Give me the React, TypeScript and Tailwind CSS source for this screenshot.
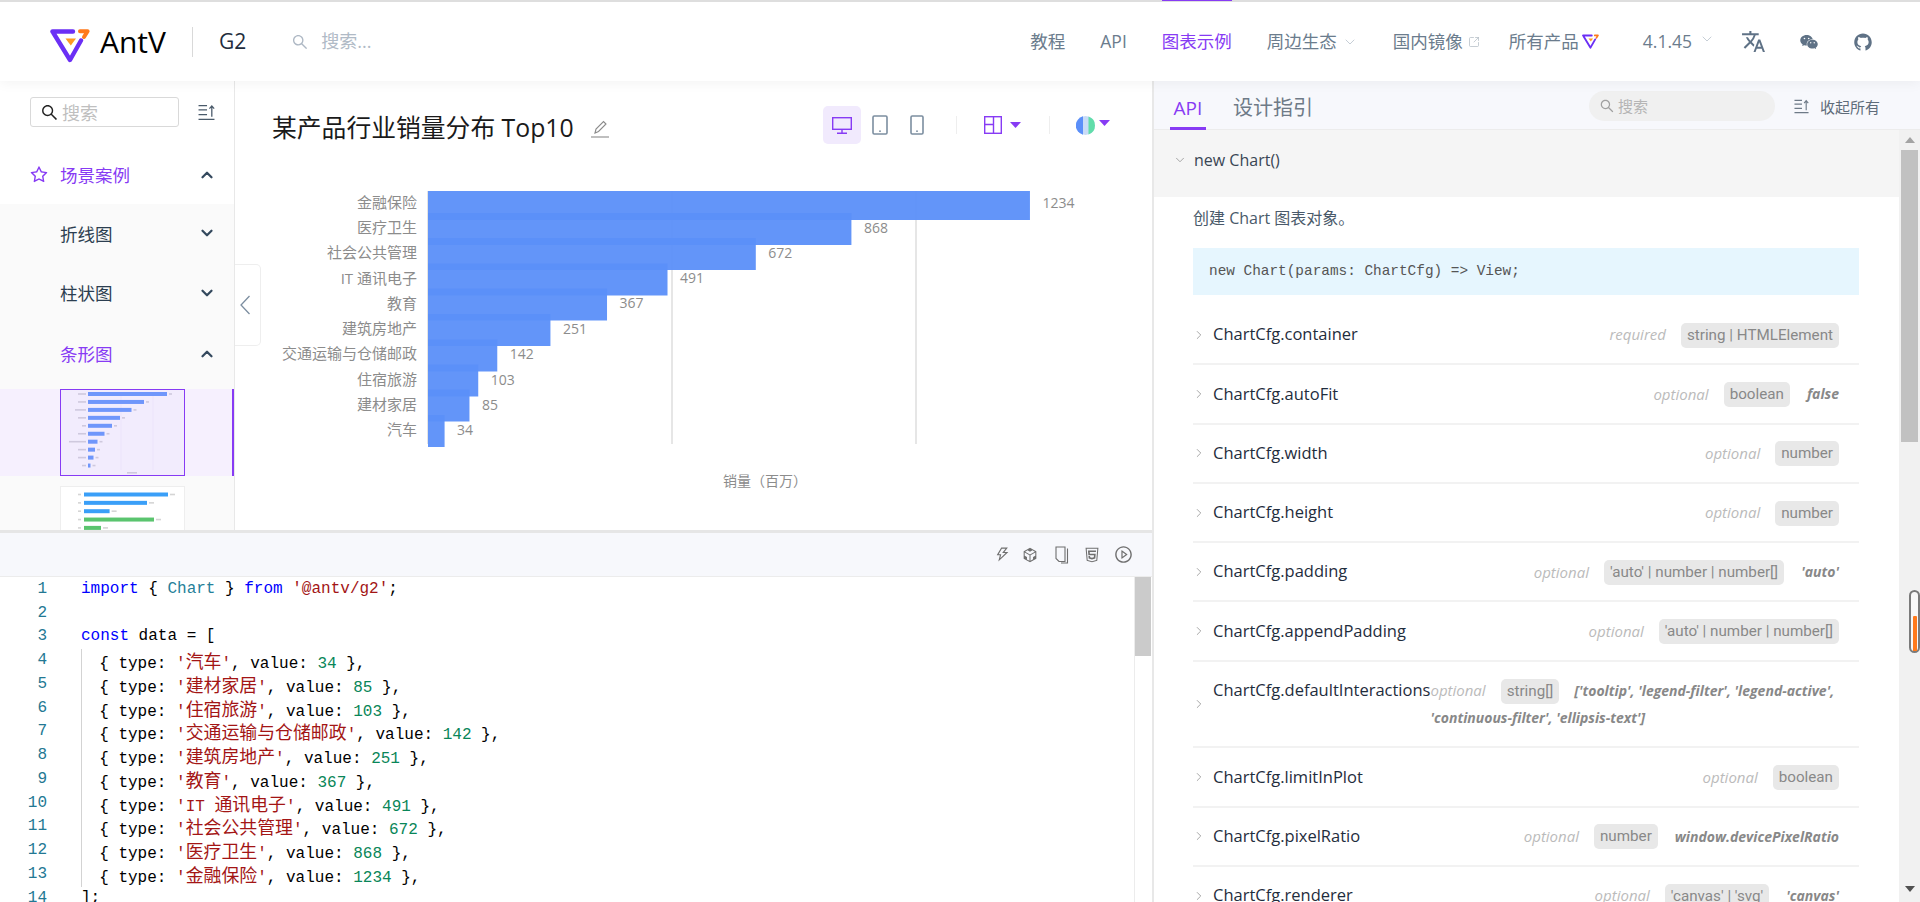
import React from 'react';
import { ChevronDown, ChevronUp, ChevronRight, SquareArrowOutUpRight } from 'lucide-react';
import { AiOutlineSearch, AiOutlineStar, AiFillWechat, AiOutlineGithub, AiOutlineThunderbolt, AiOutlineCodeSandbox, AiOutlineHtml5, AiOutlinePlayCircle } from 'react-icons/ai';
import { MdTranslate } from 'react-icons/md';

const sans = "font-['Open_Sans','Noto_Sans_CJK_SC',sans-serif]";

function Logo({ className }: { className: string }) {
  return (
    <svg viewBox="0 0 40 35" className={className} fill="none">
      <path d="M2.5 3.5H23M2.5 3.5L20 32L31 12.5" stroke="#6b2ff5" strokeWidth="4.4" strokeLinejoin="round" strokeLinecap="round" />
      <path d="M15.5 10.5H26L20.8 17.5Z" fill="#ff9a22" />
      <path d="M30 3.2H37.6L34 9" stroke="#ff7a1c" strokeWidth="4" strokeLinejoin="round" strokeLinecap="round" />
    </svg>
  );
}

function CollapseIcon({ className }: { className: string }) {
  return (
    <svg viewBox="0 0 16 16" className={className} fill="none" stroke="currentColor" strokeWidth="1.2">
      <path d="M0.5 1.5H8.5M0.5 5.5H8.5M0.5 10H8.5M0.5 14.5H15.5" />
      <path d="M13 12V2M10.8 4.4L13 1.8L15.2 4.4" />
    </svg>
  );
}

type Bar = { n: string; v: number; y: number; h: number; ly: number };
const bars: Bar[] = [
  { n: '金融保险', v: 1234, y: 191, h: 29, ly: 202 },
  { n: '医疗卫生', v: 868, y: 213, h: 32, ly: 227 },
  { n: '社会公共管理', v: 672, y: 238, h: 32, ly: 252 },
  { n: 'IT 通讯电子', v: 491, y: 263.5, h: 32, ly: 277.7 },
  { n: '教育', v: 367, y: 288.5, h: 32, ly: 302.7 },
  { n: '建筑房地产', v: 251, y: 314, h: 32, ly: 328 },
  { n: '交通运输与仓储邮政', v: 142, y: 339.5, h: 32, ly: 353 },
  { n: '住宿旅游', v: 103, y: 364.5, h: 32, ly: 379 },
  { n: '建材家居', v: 85, y: 389.5, h: 32, ly: 404 },
  { n: '汽车', v: 34, y: 415, h: 32, ly: 429 },
];

function BarChart() {
  return (
    <svg width="917" height="330" viewBox="235 165 917 330" className="block" style={{ fontFamily: "'Open Sans','Noto Sans CJK SC',sans-serif" }}>
      <line x1="427.5" y1="191" x2="427.5" y2="444" stroke="#e4e4e4" />
      <line x1="672" y1="191" x2="672" y2="444" stroke="#dedede" strokeWidth="1.5" />
      <line x1="916" y1="191" x2="916" y2="444" stroke="#dedede" strokeWidth="1.5" />
      {bars.map((b) => (
        <g key={b.n}>
          <rect x="428" y={b.y} width={b.v * 0.4878} height={b.h} fill="#5b8ff9" fillOpacity="0.95" />
          <text x="417" y={b.ly} textAnchor="end" dominantBaseline="central" fontSize="15" fill="#8c8c8c">{b.n}</text>
          <text x={428 + b.v * 0.4878 + 12.5} y={b.ly} dominantBaseline="central" fontSize="14" fill="#8c8c8c">{b.v}</text>
        </g>
      ))}
      <text x="765" y="480" textAnchor="middle" dominantBaseline="central" fontSize="14" fill="#8c8c8c">销量（百万）</text>
    </svg>
  );
}

function ThumbOne() {
  const w = [79, 56, 43.5, 32, 24, 16.5, 9.5, 7, 5.5, 2.5];
  const l = [8, 8, 11, 8, 4, 8, 17, 8, 8, 4];
  return (
    <svg width="123" height="85" viewBox="0 0 123 85" className="block">
      <line x1="60" y1="2" x2="60" y2="80" stroke="#ece4fb" />
      <line x1="92" y1="2" x2="92" y2="80" stroke="#ece4fb" />
      {w.map((v, i) => (
        <g key={i}>
          <rect x="27" y={2 + i * 7.95} width={v} height="4" fill="#6f96fb" />
          <rect x={25 - l[i]} y={3.2 + i * 7.95} width={l[i]} height="1.6" fill="#cfc9de" />
          <rect x={29 + v} y={3.2 + i * 7.95} width="3" height="1.6" fill="#cfc9de" />
        </g>
      ))}
      <rect x="66" y="82" width="10" height="1.6" fill="#cfc9de" />
    </svg>
  );
}

function ThumbTwo() {
  const d = [
    [84, '#3a9ff8'],
    [63, '#3a9ff8'],
    [25.6, '#3a9ff8'],
    [70, '#5ac46e'],
    [17, '#5ac46e'],
  ] as [number, string][];
  return (
    <svg width="123" height="48" viewBox="0 0 123 48" className="block">
      {d.map(([v, c], i) => (
        <g key={i}>
          <rect x="23" y={5.5 + i * 8.35} width={v} height="4" fill={c} />
          <rect x="17" y={6.7 + i * 8.35} width="3" height="1.6" fill="#d5d5d5" />
          <rect x={25 + v} y={6.7 + i * 8.35} width="5" height="1.6" fill="#d5d5d5" />
        </g>
      ))}
    </svg>
  );
}

function Sidebar() {
  return (
    <div className="w-[235px] shrink-0 border-r border-[#e8e8e8] overflow-hidden flex flex-col bg-white">
      <div className="h-[65px] shrink-0 flex items-start pt-[16px] pl-[30px]">
        <div className="w-[149px] h-[30px] border border-[#d9d9d9] rounded-[3px] flex items-center pl-[9px] text-[#222]">
          <AiOutlineSearch className="w-[19px] h-[19px]" />
          <span className="ml-[3px] mt-[2px] text-[18px] leading-[26px] text-[#bfbfbf]">搜索</span>
        </div>
        <CollapseIcon className="w-[17px] h-[17px] ml-[19px] mt-[7px] text-[#4a5a6a]" />
      </div>
      <div className="h-[58px] shrink-0 flex items-center pl-[29px] pr-[18px] text-[#873bf4] text-[17.5px]">
        <AiOutlineStar className="w-[20px] h-[20px]" />
        <span className="ml-[11px]">场景案例</span>
        <ChevronUp className="ml-auto w-[18px] h-[18px] text-[#34495e]" strokeWidth={3} />
      </div>
      <div className="flex-1 bg-[#fafafa]">
        <div className="h-[60px] flex items-center pl-[60px] pr-[18px] text-[17.5px] text-[#2c3e50]">
          <span>折线图</span>
          <ChevronDown className="ml-auto w-[18px] h-[18px] -mt-[2px] text-[#34495e]" strokeWidth={3} />
        </div>
        <div className="h-[59px] flex items-center pl-[60px] pr-[18px] text-[17.5px] text-[#2c3e50]">
          <span>柱状图</span>
          <ChevronDown className="ml-auto w-[18px] h-[18px] -mt-[2px] text-[#34495e]" strokeWidth={3} />
        </div>
        <div className="h-[66px] pb-[4px] flex items-center pl-[60px] pr-[18px] text-[17.5px] text-[#873bf4]">
          <span>条形图</span>
          <ChevronUp className="ml-auto w-[18px] h-[18px] text-[#34495e]" strokeWidth={3} />
        </div>
        <div className="h-[87px] bg-[#f6f0fe] border-r-[2px] border-[#873bf4] pl-[60px]">
          <div className="w-[125px] h-[87px] border border-[#873bf4] bg-[#f2ecfd]">
            <ThumbOne />
          </div>
        </div>
        <div className="mt-[10px] ml-[60px] w-[125px] h-[50px] border border-[#eeeeee] bg-white">
          <ThumbTwo />
        </div>
      </div>
    </div>
  );
}

function DeviceIcon({ w, h, className }: { w: number; h: number; className: string }) {
  return (
    <svg viewBox={`0 0 ${w} ${h}`} className={className} fill="none">
      <rect x="1" y="1" width={w - 2} height={h - 2} rx="1.2" stroke="#7c8ea0" strokeWidth="1.6" />
      <rect x={w / 2 - 0.8} y={h - 4.6} width="1.6" height="1.6" fill="#7c8ea0" />
    </svg>
  );
}

function ChartArea() {
  return (
    <div className="flex-1 min-w-0 relative bg-white overflow-hidden">
      <div className="h-[84px] flex items-start">
        <div className="ml-[37px] mt-[29px] flex items-center">
          <span className="text-[24.8px] leading-[34px] text-[#1a1a1a]">某产品行业销量分布 Top10</span>
          <svg viewBox="0 0 18 19" className="w-[18px] h-[19px] ml-[17px] mt-[2px]" fill="none" stroke="#8a8a8a" strokeWidth="1.1">
            <path d="M4 14L5 10L12.5 2.5L15 5L7.5 12.5Z" />
            <path d="M0 18H18" />
          </svg>
        </div>
        <div className="ml-auto mr-[42px] mt-[25px] flex items-center">
          <div className="w-[38px] h-[38px] rounded-[5px] bg-[#f1eafd] flex items-center justify-center">
            <svg viewBox="0 0 20 17" className="w-[20px] h-[17px]" fill="none" stroke="#873bf4" strokeWidth="1.4">
              <rect x="0.7" y="0.7" width="18.6" height="11.6" />
              <path d="M10 12.5V16M5 16.2H15" />
            </svg>
          </div>
          <DeviceIcon w={16} h={20} className="w-[16px] h-[20px] ml-[11px]" />
          <DeviceIcon w={14} h={20} className="w-[14px] h-[20px] ml-[22px]" />
          <div className="w-px h-[18px] bg-[#eeeeee] ml-[32px]" />
          <svg viewBox="0 0 18 18" className="w-[18px] h-[18px] ml-[27px]" fill="none" stroke="#873bf4" strokeWidth="1.4">
            <rect x="0.7" y="0.7" width="16.6" height="16.6" />
            <path d="M9.5 0.7V17.3M0.7 8.5H9.5" />
          </svg>
          <svg viewBox="0 0 11 6" className="w-[11px] h-[6px] ml-[8px]"><path d="M0 0H11L5.5 6Z" fill="#873bf4" /></svg>
          <div className="w-px h-[18px] bg-[#eeeeee] ml-[28px]" />
          <svg viewBox="0 0 19 19" className="w-[19px] h-[19px] ml-[26px]">
            <circle cx="9.5" cy="9.5" r="9.5" fill="#c9dcf7" />
            <path d="M7 .3A9.5 9.5 0 0 0 7 18.7Z" fill="#5b8ff9" />
            <path d="M12.5 .5A9.5 9.5 0 0 1 12.5 18.5Z" fill="#61ddaa" />
          </svg>
          <svg viewBox="0 0 11 6" className="w-[11px] h-[6px] ml-[4px] -mt-[4px]"><path d="M0 0H11L5.5 6Z" fill="#873bf4" /></svg>
        </div>
      </div>
      <BarChart />
      <div className="absolute left-0 top-[183px] w-[26px] h-[82px] bg-white border border-l-0 border-[#eeeeee] rounded-r-[5px] flex items-center">
        <svg viewBox="0 0 10 20" className="w-[10px] h-[20px] ml-[5px]" fill="none" stroke="#7c8ea0" strokeWidth="1.3">
          <path d="M9.5 1L1 10L9.5 19" />
        </svg>
      </div>
    </div>
  );
}

const K = 'text-[#0000ff]';
const T = 'text-[#267f99]';
const S = 'text-[#a31515]';
const N = 'text-[#098658]';

function Str({ children }: { children: string }) {
  const latin = children.startsWith('IT ') ? 'IT ' : '';
  const cjk = children.slice(latin.length);
  return <span className={S}>'{latin}<span className="text-[17.9px] font-['Noto_Sans_CJK_SC']">{cjk}</span>'</span>;
}

function DataLine({ t, v }: { t: string; v: number }) {
  return (
    <div className="h-[23.74px] -ml-[2px]">
      {'  { type: '}
      <Str>{t}</Str>
      {', value: '}
      <span className={N}>{v}</span>
      {' },'}
    </div>
  );
}

function Editor() {
  const data: [string, number][] = [
    ['汽车', 34], ['建材家居', 85], ['住宿旅游', 103], ['交通运输与仓储邮政', 142], ['建筑房地产', 251],
    ['教育', 367], ['IT 通讯电子', 491], ['社会公共管理', 672], ['医疗卫生', 868], ['金融保险', 1234],
  ];
  return (
    <div className="flex-1 min-h-0 flex bg-white overflow-hidden font-['Liberation_Mono','Noto_Sans_CJK_SC',monospace] text-[16px] leading-[23.74px] text-black">
      <div className="w-[47px] shrink-0 pt-[1px] text-right text-[#237893]">
        {Array.from({ length: 14 }, (_, i) => (
          <div key={i} className="h-[23.74px]">{i + 1}</div>
        ))}
      </div>
      <div className="ml-[34px] flex-1 pt-[1px] whitespace-pre min-w-0">
        <div className="h-[23.74px]">
          <span className={K}>import</span> {'{ '}<span className={T}>Chart</span>{' } '}<span className={K}>from</span> <span className={S}>'@antv/g2'</span>;
        </div>
        <div className="h-[23.74px]" />
        <div className="h-[23.74px]">
          <span className={K}>const</span> data = [
        </div>
        <div className="border-l border-[#d3d3d3]">
          {data.map(([t, v]) => <DataLine key={t} t={t} v={v} />)}
        </div>
        <div className="h-[23.74px]">];</div>
      </div>
      <div className="w-[18px] shrink-0 border-l border-[#ececec] pr-[1px]">
        <div className="h-[79px] bg-[#cbcbcb]" />
      </div>
    </div>
  );
}

function EditorToolbar() {
  return (
    <div className="h-[44px] shrink-0 bg-[#f7f8fc] border-b border-[#ececec] flex items-center justify-end pr-[19px] text-[#6f6f6f]">
      <AiOutlineThunderbolt className="w-[17px] h-[17px]" />
      <AiOutlineCodeSandbox className="w-[18px] h-[18px] ml-[10px]" />
      <svg viewBox="0 0 16 18" className="w-[16px] h-[18px] ml-[14px]" fill="none" stroke="currentColor" strokeWidth="1.1">
        <path d="M3 1H12V15.5H6L3 12.5Z" />
        <path d="M14.5 2.5V17H8" />
      </svg>
      <AiOutlineHtml5 className="w-[18px] h-[18px] ml-[14px]" />
      <AiOutlinePlayCircle className="w-[19px] h-[19px] ml-[13px]" />
    </div>
  );
}

type Row = { name: string; tag: string; type?: string; def?: string };
const rows: Row[] = [
  { name: 'ChartCfg.container', tag: 'required', type: 'string | HTMLElement' },
  { name: 'ChartCfg.autoFit', tag: 'optional', type: 'boolean', def: 'false' },
  { name: 'ChartCfg.width', tag: 'optional', type: 'number' },
  { name: 'ChartCfg.height', tag: 'optional', type: 'number' },
  { name: 'ChartCfg.padding', tag: 'optional', type: "'auto' | number | number[]", def: "'auto'" },
  { name: 'ChartCfg.appendPadding', tag: 'optional', type: "'auto' | number | number[]" },
];
const rows2: Row[] = [
  { name: 'ChartCfg.limitInPlot', tag: 'optional', type: 'boolean' },
  { name: 'ChartCfg.pixelRatio', tag: 'optional', type: 'number', def: 'window.devicePixelRatio' },
  { name: 'ChartCfg.renderer', tag: 'optional', type: "'canvas' | 'svg'", def: "'canvas'" },
];

function Badge({ children }: { children: string }) {
  return <span className="inline-block h-[25px] leading-[25px] px-[6px] bg-[#e8e8e8] rounded-[5px] font-['Roboto',sans-serif] text-[15.2px] text-[#888888]">{children}</span>;
}

function ApiRow({ r }: { r: Row }) {
  return (
    <div className="h-[59.3px] shrink-0 border-b-2 border-[#f2f2f2] flex items-center pr-[20px]">
      <ChevronRight className="w-[14px] h-[14px] -ml-[1px] text-[#8c8c8c]" strokeWidth={1.3} />
      <span className="ml-[7px] text-[16.5px] text-[#1f2d3d]">{r.name}</span>
      <div className="ml-auto flex items-center">
        <span className="italic text-[15px] font-medium text-[#bbbbbb]">{r.tag}</span>
        {r.type && <span className="ml-[15px]"><Badge>{r.type}</Badge></span>}
        {r.def && <span className="ml-[17px] italic font-bold text-[14px] text-[#888888]">{r.def}</span>}
      </div>
    </div>
  );
}

function RightPanel() {
  return (
    <div className="flex-1 min-w-0 flex flex-col relative overflow-hidden">
      <div className="h-[49px] shrink-0 bg-[#f7f8fc] border-b border-[#ececec] flex items-start pl-[16px]">
        <div className="w-[36px] h-[49px] border-b-[3px] border-[#873bf4] text-[#873bf4] text-[19px] leading-[54px] text-center">API</div>
        <div className="ml-[27px] text-[#6e7a87] text-[20px] leading-[54px]">设计指引</div>
        <div className="ml-auto mt-[10px] w-[186px] h-[30px] rounded-full bg-[#f0f0f0] flex items-center pl-[10px] text-[#a0a0a0]">
          <AiOutlineSearch className="w-[16px] h-[16px]" />
          <span className="ml-[3px] text-[15px] text-[#b5b5b5]">搜索</span>
        </div>
        <CollapseIcon className="w-[15px] h-[15px] ml-[19px] mt-[18px] text-[#6e7a87]" />
        <span className="ml-[11px] mr-[40px] mt-[15px] text-[15px] text-[#5f6c7a]">收起所有</span>
      </div>
      <div className="flex-1 min-h-0 flex overflow-hidden">
        <div className="flex-1 min-w-0 flex flex-col overflow-hidden">
          <div className="h-[67px] shrink-0 bg-[#f5f5f5] flex items-start pt-[20px] pl-[19px] text-[16px] text-[#3a4654]">
            <ChevronDown className="w-[14px] h-[14px] mt-[3px] text-[#8c8c8c]" strokeWidth={1.3} />
            <span className="ml-[7px] leading-[20px]">new Chart()</span>
          </div>
          <div className="pl-[39px] pr-[40px] flex flex-col flex-1">
            <div className="h-[51px] shrink-0 flex items-start pt-[9px] text-[16px] text-[#4a5a6a]">创建 Chart 图表对象。</div>
            <div className="h-[47px] shrink-0 bg-[#e6f6fe] flex items-center pl-[16px] font-['Liberation_Mono',monospace] text-[14.4px] text-[#555555] whitespace-pre">new Chart(params: ChartCfg) =&gt; View;</div>
            <div className="h-[11px] shrink-0" />
            {rows.map((r) => <ApiRow key={r.name} r={r} />)}
            <div className="h-[86.5px] shrink-0 border-b-2 border-[#f2f2f2] flex pr-[20px]">
              <ChevronRight className="w-[14px] h-[14px] -ml-[1px] self-center text-[#8c8c8c]" strokeWidth={1.3} />
              <span className="ml-[7px] text-[16.5px] text-[#1f2d3d] mt-[16px] leading-[24px]">ChartCfg.defaultInteractions</span>
              <div className="flex-1 mt-[15px] leading-[27px]">
                <span className="italic text-[15px] font-medium text-[#bbbbbb]">optional</span>
                <span className="ml-[15px]"><Badge>string[]</Badge></span>
                <span className="ml-[15px] italic font-bold text-[14px] text-[#888888]">['tooltip', 'legend-filter', 'legend-active', 'continuous-filter', 'ellipsis-text']</span>
              </div>
            </div>
            {rows2.map((r) => <ApiRow key={r.name} r={r} />)}
          </div>
        </div>
        <div className="w-[21px] shrink-0 bg-[#f1f1f1] flex flex-col items-center relative">
          <svg viewBox="0 0 10 6" className="w-[10px] h-[6px] mt-[7px]"><path d="M5 0L10 6H0Z" fill="#a3a3a3" /></svg>
          <div className="w-[17px] h-[292px] mt-[7px] bg-[#c1c1c1]" />
          <svg viewBox="0 0 10 6" className="w-[10px] h-[6px] mt-auto mb-[10px]"><path d="M5 6L10 0H0Z" fill="#505050" /></svg>
          <div className="absolute left-[10px] top-[460px] w-[11px] h-[63px] rounded-full border-2 border-[#7a7a7a] bg-[#f8f8f8] flex justify-center items-end">
            <div className="w-[4px] h-[35px] bg-[#ff7a1c] rounded-t-[1px]" />
          </div>
        </div>
      </div>
    </div>
  );
}

function Header() {
  const nav = 'text-[17.5px] text-[#6b7c8d]';
  return (
    <header className="h-[81px] shrink-0 bg-white border-t-2 border-[#dedede] relative z-10 shadow-[0_2px_12px_rgba(0,0,0,0.05)] flex items-center pl-[50px] pr-[47px]">
      <Logo className="w-[40px] h-[35px] mt-[8px]" />
      <span className="ml-[10px] text-[30px] leading-none text-black font-medium">AntV</span>
      <div className="w-px h-[30px] bg-[#d9d9d9] ml-[26px]" />
      <span className="ml-[26px] text-[21px] font-medium text-[#1f2d3d]">G2</span>
      <AiOutlineSearch className="ml-[45px] w-[18px] h-[18px] text-[#aeb8c4]" />
      <span className="ml-[12px] text-[18px] text-[#b0bac6]">搜索...</span>
      <nav className="ml-auto flex items-center">
        <span className={nav}>教程</span>
        <span className={nav + ' ml-[35px]'}>API</span>
        <span className="relative ml-[35px] text-[17.5px] text-[#873bf4]">
          图表示例
          <span className="absolute left-0 right-0 -top-[29px] h-[2px] bg-[#873bf4]" />
        </span>
        <span className={nav + ' ml-[35px]'}>周边生态</span>
        <ChevronDown className="w-[16px] h-[16px] ml-[5px] text-[#b8c2cc]" strokeWidth={1.2} />
        <span className={nav + ' ml-[35px]'}>国内镜像</span>
        <SquareArrowOutUpRight className="w-[12px] h-[12px] ml-[5px] text-[#a9b3bd]" strokeWidth={1.3} />
        <span className={nav + ' ml-[29px]'}>所有产品</span>
        <Logo className="w-[17px] h-[15px] ml-[3px]" />
        <span className={nav + ' ml-[44px]'}>4.1.45</span>
        <ChevronDown className="w-[16px] h-[16px] ml-[7px] -mt-[6px] text-[#b8c2cc]" strokeWidth={1.2} />
        <MdTranslate className="w-[25px] h-[25px] ml-[26px] text-[#5f7286]" />
        <AiFillWechat className="w-[20px] h-[20px] ml-[33px] text-[#5f7286]" />
        <AiOutlineGithub className="w-[20px] h-[20px] ml-[34px] text-[#5f7286]" />
      </nav>
    </header>
  );
}

export default function App() {
  return (
    <div className={`${sans} w-[1920px] h-[902px] overflow-hidden bg-white flex flex-col`}>
      <Header />
      <div className="flex-1 min-h-0 flex">
        <div className="w-[1152px] shrink-0 flex flex-col min-h-0">
          <div className="h-[449px] shrink-0 flex">
            <Sidebar />
            <ChartArea />
          </div>
          <div className="h-[3px] shrink-0 bg-[#e6e6e6]" />
          <EditorToolbar />
          <Editor />
        </div>
        <div className="w-[2px] shrink-0 bg-[#e8e8e8]" />
        <RightPanel />
      </div>
    </div>
  );
}
